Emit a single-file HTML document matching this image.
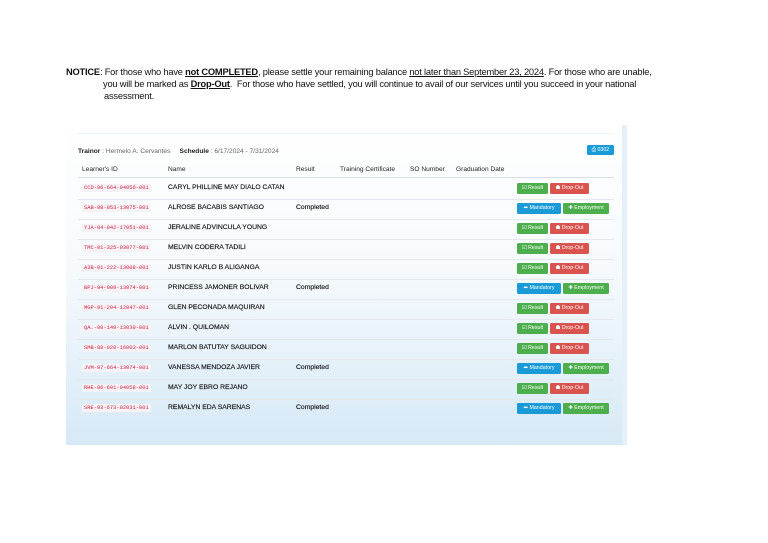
<!DOCTYPE html>
<html><head><meta charset="utf-8"><style>
*{margin:0;padding:0;box-sizing:border-box}
body{width:768px;height:543px;background:#fff;position:relative;font-family:"Liberation Sans",sans-serif;overflow:hidden}
.n{position:absolute;font-size:9.3px;color:#111;line-height:13px;letter-spacing:-0.2px;white-space:nowrap}
.panel{position:absolute;left:66px;top:125px;width:561px;height:320px;background:linear-gradient(#ffffff 0%,#f6fafd 45%,#d6e9f6 100%);border-right:5px solid #e3f0f8}
.a{position:absolute;font-size:6.6px;color:#222;white-space:nowrap}
.id{position:absolute;left:82px;font-family:"Liberation Mono",monospace;font-size:5.4px;color:#c7254e;background:#f9f2f4;padding:1px 2px}
.nm{position:absolute;left:168px;font-size:6.8px;color:#111;font-weight:500;-webkit-text-stroke:0.15px #111}
.rs{position:absolute;left:296px;font-size:6.8px;color:#111;-webkit-text-stroke:0.15px #111}
.hl{position:absolute;left:78px;width:536px;height:1px;background:#e4e8ec}
.b{position:absolute;height:11px;font-size:5.3px;color:#fff;line-height:11px;text-align:center;border-radius:1.5px}
.g{background:#4cae4c}.r{background:#d9534f}.bl{background:#1a9bd7}
</style></head><body>
<div class="n" style="left:66px;top:66px"><b>NOTICE</b>: For those who have <u><b>not COMPLETED</b></u>, please settle your remaining balance <u>not later than September 23, 2024</u>. For those who are unable,</div>
<div class="n" style="left:103px;top:78px">you will be marked as <u><b>Drop-Out</b></u>.&nbsp; For those who have settled, you will continue to avail of our services until you succeed in your national</div>
<div class="n" style="left:104px;top:90px">assessment.</div>
<div class="panel"></div>
<div class="hl" style="top:133px;background:#e8f3f9"></div>
<div class="a" style="left:78px;top:148px"><b>Trainor</b> <span style="color:#666">: Hermelo A. Cervantes</span> &nbsp;&nbsp;&nbsp;&nbsp;<b>Schedule</b> <span style="color:#666">: 6/17/2024 - 7/31/2024</span></div>
<div class="b bl" style="left:587px;top:145px;width:27px;height:10px;line-height:10px">⎙ 0302</div>
<div class="a" style="left:82px;top:166px">Learner's ID</div>
<div class="a" style="left:168px;top:166px">Name</div>
<div class="a" style="left:296px;top:166px">Result</div>
<div class="a" style="left:340px;top:166px">Training Certificate</div>
<div class="a" style="left:410px;top:166px">SO Number</div>
<div class="a" style="left:456px;top:166px">Graduation Date</div>
<div class="hl" style="top:177px;background:#d8dde2"></div>
<div id="rows"></div>
<script>
var d=[["CCD-96-664-04056-001","CARYL PHILLINE MAY DIALO CATAN",0],["SAB-98-053-13075-001","ALROSE BACABIS SANTIAGO",1],["YJA-04-042-17051-001","JERALINE ADVINCULA YOUNG",0],["TMC-01-325-03077-001","MELVIN CODERA TADILI",0],["A3B-01-222-13008-001","JUSTIN KARLO B ALIGANGA",0],["BPJ-94-009-13074-001","PRINCESS JAMONER BOLIVAR",1],["MGP-91-204-12047-001","GLEN PECONADA MAQUIRAN",0],["QA.-00-149-13030-001","ALVIN . QUILOMAN",0],["SMB-88-020-16003-001","MARLON BATUTAY SAGUIDON",0],["JVM-97-664-13074-001","VANESSA MENDOZA JAVIER",1],["RHE-86-601-04058-001","MAY JOY EBRO REJANO",0],["SRE-93-673-02031-001","REMALYN EDA SARENAS",1]];
var h="";
d.forEach(function(r,i){var y=183+i*20;
h+='<div class="id" style="top:'+(y+1)+'px">'+r[0]+'</div><div class="nm" style="top:'+(y+1)+'px">'+r[1]+'</div>';
if(r[2]){h+='<div class="rs" style="top:'+(y+1)+'px">Completed</div><div class="b bl" style="left:517px;top:'+y+'px;width:44px">➦ Mandatory</div><div class="b g" style="left:563px;top:'+y+'px;width:46px">✚ Employment</div>';}
else{h+='<div class="b g" style="left:517px;top:'+y+'px;width:31px">☑ Result</div><div class="b r" style="left:550px;top:'+y+'px;width:39px">☗ Drop-Out</div>';}
if(i<11)h+='<div class="hl" style="top:'+(y+16)+'px"></div>';});
document.getElementById("rows").innerHTML=h;
</script>
</body></html>
